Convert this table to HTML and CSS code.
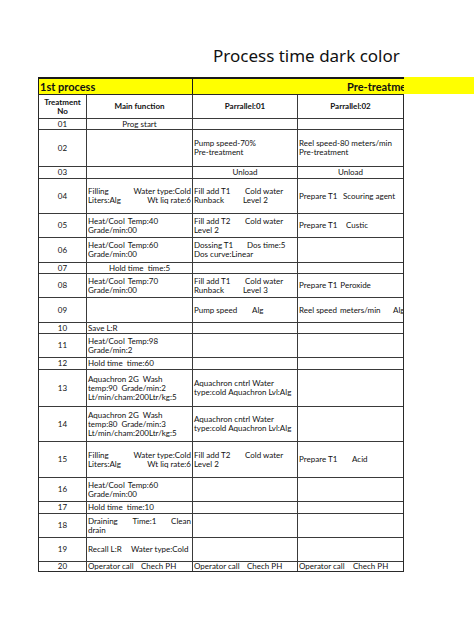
FILE: index.html
```html
<!DOCTYPE html>
<html>
<head>
<meta charset="utf-8">
<link rel="stylesheet" href="styles.css">
</head>
<body>
<div class="title">Process time dark color</div>
<div class="band">
  <div class="band-main">
    <div class="band-a">1st process</div>
    <div class="band-b"><span>Pre-treatment</span></div>
  </div>
</div>
<div class="grid">
  <div class="c hd">Treatment<br>No</div>
  <div class="c hd">Main function</div>
  <div class="c hd">Parrallel:01</div>
  <div class="c hd">Parrallel:02</div>

  <div class="c n">01</div>
  <div class="c ctr">Prog start</div>
  <div class="c"></div>
  <div class="c"></div>

  <div class="c n">02</div>
  <div class="c"></div>
  <div class="c"><div>Pump speed-70%</div><div>Pre-treatment</div></div>
  <div class="c"><div>Reel speed-80 meters/min</div><div>Pre-treatment</div></div>

  <div class="c n">03</div>
  <div class="c"></div>
  <div class="c ctr">Unload</div>
  <div class="c ctr">Unload</div>

  <div class="c n">04</div>
  <div class="c"><div class="sb"><span>Filling</span><span>Water type:Cold</span></div><div class="sb"><span>Liters:Alg</span><span>Wt liq rate:6</span></div></div>
  <div class="c"><div><span class="w48">Fill add T1</span>Cold water</div><div><span class="w46">Runback</span>Level 2</div></div>
  <div class="c"><div><span class="w41">Prepare T1</span>Scouring agent</div></div>

  <div class="c n">05</div>
  <div class="c"><div><span class="w30">Heat/Cool</span>Temp:40</div><div>Grade/min:00</div></div>
  <div class="c"><div><span class="w48">Fill add T2</span>Cold water</div><div>Level 2</div></div>
  <div class="c"><div><span class="w44">Prepare T1</span>Custic</div></div>

  <div class="c n">06</div>
  <div class="c"><div><span class="w30">Heat/Cool</span>Temp:60</div><div>Grade/min:00</div></div>
  <div class="c"><div><span class="w50">Dossing T1</span>Dos time:5</div><div>Dos curve:Linear</div></div>
  <div class="c"></div>

  <div class="c n">07</div>
  <div class="c ctr">Hold time&nbsp; time:5</div>
  <div class="c"></div>
  <div class="c"></div>

  <div class="c n">08</div>
  <div class="c"><div><span class="w30">Heat/Cool</span>Temp:70</div><div>Grade/min:00</div></div>
  <div class="c"><div><span class="w48">Fill add T1</span>Cold water</div><div><span class="w46">Runback</span>Level 3</div></div>
  <div class="c"><div><span class="w38">Prepare T1</span>Peroxide</div></div>

  <div class="c n">09</div>
  <div class="c"></div>
  <div class="c"><div><span class="w55">Pump speed</span>Alg</div></div>
  <div class="c"><div><span class="w34">Reel speed</span><span class="w50">meters/min</span>Alg</div></div>

  <div class="c n">10</div>
  <div class="c">Save L:R</div>
  <div class="c"></div>
  <div class="c"></div>

  <div class="c n">11</div>
  <div class="c"><div><span class="w30">Heat/Cool</span>Temp:98</div><div>Grade/min:2</div></div>
  <div class="c"></div>
  <div class="c"></div>

  <div class="c n">12</div>
  <div class="c">Hold time&nbsp; time:60</div>
  <div class="c"></div>
  <div class="c"></div>

  <div class="c n">13</div>
  <div class="c"><div>Aquachron 2G&nbsp; Wash</div><div>temp:90&nbsp; Grade/min:2</div><div>Lt/min/cham:200Ltr/kg:5</div></div>
  <div class="c"><div>Aquachron cntrl Water</div><div>type:cold Aquachron Lvl:Alg</div></div>
  <div class="c"></div>

  <div class="c n">14</div>
  <div class="c"><div>Aquachron 2G&nbsp; Wash</div><div>temp:80&nbsp; Grade/min:3</div><div>Lt/min/cham:200Ltr/kg:5</div></div>
  <div class="c"><div>Aquachron cntrl Water</div><div>type:cold Aquachron Lvl:Alg</div></div>
  <div class="c"></div>

  <div class="c n">15</div>
  <div class="c"><div class="sb"><span>Filling</span><span>Water type:Cold</span></div><div class="sb"><span>Liters:Alg</span><span>Wt liq rate:6</span></div></div>
  <div class="c"><div><span class="w48">Fill add T2</span>Cold water</div><div>Level 2</div></div>
  <div class="c"><div><span class="w50">Prepare T1</span>Acid</div></div>

  <div class="c n">16</div>
  <div class="c"><div><span class="w30">Heat/Cool</span>Temp:60</div><div>Grade/min:00</div></div>
  <div class="c"></div>
  <div class="c"></div>

  <div class="c n">17</div>
  <div class="c">Hold time&nbsp; time:10</div>
  <div class="c"></div>
  <div class="c"></div>

  <div class="c n">18</div>
  <div class="c"><div class="sb"><span>Draining</span><span>Time:1</span><span>Clean</span></div><div>drain</div></div>
  <div class="c"></div>
  <div class="c"></div>

  <div class="c n">19</div>
  <div class="c"><div><span class="w40">Recall L:R</span>Water type:Cold</div></div>
  <div class="c"></div>
  <div class="c"></div>

  <div class="c n top">20</div>
  <div class="c top"><div><span class="w50">Operator call</span>Chech PH</div></div>
  <div class="c top"><div><span class="w50">Operator call</span>Chech PH</div></div>
  <div class="c top"><div><span class="w51">Operator call</span>Chech PH</div></div>
</div>
</body>
</html>
```

FILE: styles.css
```css
html, body {
  margin: 0;
  padding: 0;
  background: #ffffff;
}
body {
  width: 474px;
  height: 632px;
  overflow: hidden;
  color: #111111;
}
.title {
  margin-top: 46px;
  padding-left: 213px;
  height: 20px;
  font-family: "Noto Sans", sans-serif;
  font-size: 17px;
  line-height: 20px;
  color: #111111;
  white-space: nowrap;
}
.band {
  margin-top: 11px;
  margin-left: 38px;
  height: 17px;
  background: #ffff00;
  display: flex;
}
.band-main {
  width: 365px;
  height: 15px;
  border-top: 2px solid #1a1a1a;
  border-left: 1px solid #1a1a1a;
  display: flex;
  font-family: Lato, "Open Sans", sans-serif;
  font-weight: 700;
  font-size: 11px;
  line-height: 15px;
}
.band-a {
  width: 154px;
  border-right: 1px solid #1a1a1a;
  padding-left: 1px;
  box-sizing: border-box;
}
.band-b {
  width: 211px;
  overflow: hidden;
  white-space: nowrap;
  padding-left: 154px;
  box-sizing: border-box;
}
.grid {
  margin-left: 38px;
  display: grid;
  grid-template-columns: 47px 105px 104px 105px;
  grid-template-rows: 23px 10px 36px 11px 34px 23px 24px 10px 23px 24px 10px 23px 11px 36px 34px 35px 23px 11px 23px 23px 9px;
  gap: 1px;
  background: #3a3a3a;
  border: 1px solid #2a2a2a;
  width: max-content;
}
.c {
  background: #ffffff;
  display: flex;
  flex-direction: column;
  justify-content: center;
  padding: 0 1px;
  font-family: Lato, "Open Sans", sans-serif;
  font-size: 8px;
  line-height: 9px;
  white-space: nowrap;
  overflow: hidden;
  min-width: 0;
}
.hd {
  font-weight: 700;
  text-align: center;
  white-space: normal;
}
.n, .ctr {
  text-align: center;
}
.top {
  justify-content: flex-start;
}
.sb {
  display: flex;
  justify-content: space-between;
}
.w30, .w34, .w38, .w40, .w41, .w44, .w46, .w48, .w50, .w51, .w55 {
  display: inline-block;
  padding-right: 3px;
}
.w30 { min-width: 30px; }
.w34 { min-width: 34px; }
.w38 { min-width: 38px; }
.w40 { min-width: 40px; }
.w41 { min-width: 41px; }
.w44 { min-width: 44px; }
.w46 { min-width: 46px; }
.w48 { min-width: 48px; }
.w50 { min-width: 50px; }
.w51 { min-width: 51px; }
.w55 { min-width: 55px; }
```
